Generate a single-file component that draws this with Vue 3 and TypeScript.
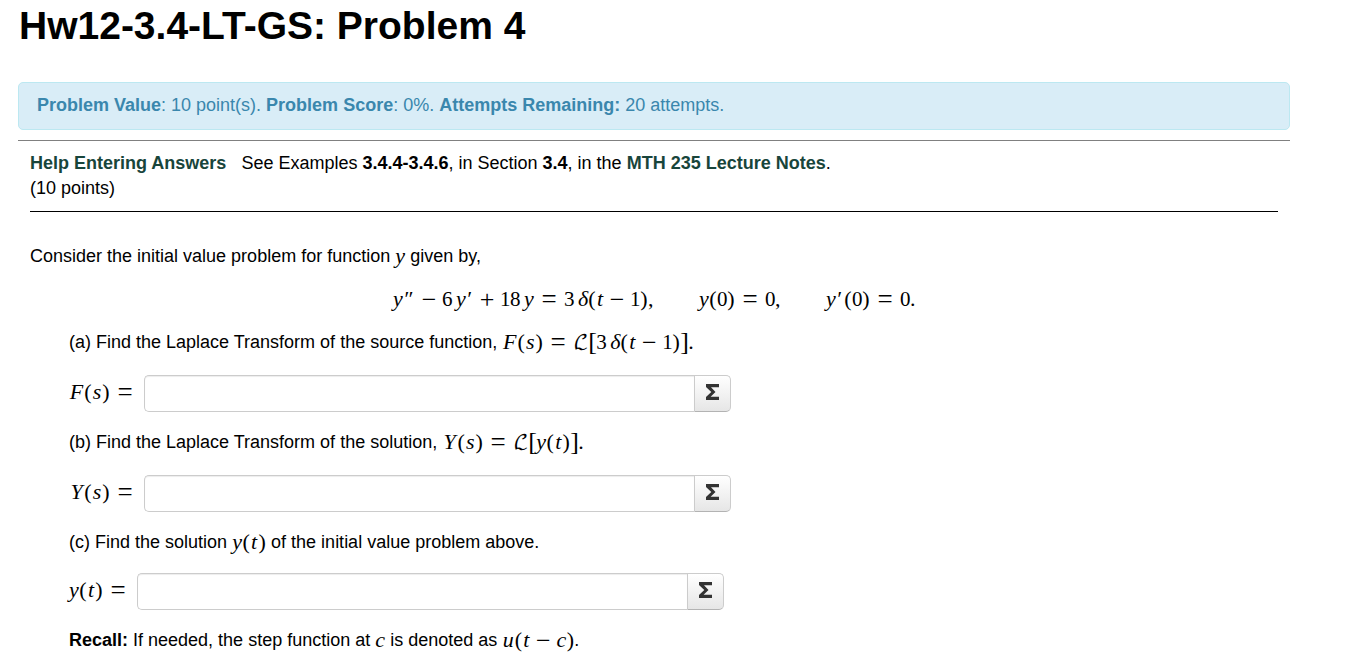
<script setup lang="ts">
import { h, ref, type FunctionalComponent } from 'vue'

const kinds: Record<string, string> = {
  y: 'var mid', s: 'var mid', c: 'var mid', 'δ': 'var mid', t: 'var narrow', u: 'var broad',
  F: 'var wide', Y: 'var wide', L: 'script', '(': 'paren', ')': 'paren', '[': 'bracket', ']': 'bracket',
  '=': 'rel', '−': 'op', '+': 'op', '′': 'prime', '″': 'prime double', ',': 'punct', '.': 'punct', '~': 'thin', '_': 'quad',
}
const glyphs: Record<string, string> = { L: 'ℒ', '~': ' ', _: ' ' }

const Formula: FunctionalComponent<{ tex: string }> = (props) =>
  h('span', { class: 'formula' },
    [...props.tex].map((ch) => h('span', { class: kinds[ch] ?? 'digit' }, glyphs[ch] ?? ch)))
Formula.props = ['tex']

const parts = [
  { id: 'a', before: '(a) Find the Laplace Transform of the source function, ', tex: 'F(s)=L[3~δ(t−1)].', after: '', label: 'F(s)=' },
  { id: 'b', before: '(b) Find the Laplace Transform of the solution, ', tex: 'Y(s)=L[y(t)].', after: '', label: 'Y(s)=' },
  { id: 'c', before: '(c) Find the solution ', tex: 'y(t)', after: ' of the initial value problem above.', label: 'y(t)=' },
]
const answers = ref<Record<string, string>>({ a: '', b: '', c: '' })
</script>

<template>
  <main class="page">
    <h1>Hw12-3.4-LT-GS: Problem 4</h1>
    <div class="alert">
      <b>Problem Value</b>: 10 point(s). <b>Problem Score</b>: 0%. <b>Attempts Remaining:</b> 20 attempts.
    </div>
    <section class="problem">
      <p><a class="help" href="#">Help Entering Answers</a>See Examples <b>3.4.4-3.4.6</b>, in Section <b>3.4</b>, in the <a href="#">MTH 235 Lecture Notes</a>.</p>
      <p>(10 points)</p>
      <hr>
      <p>Consider the initial value problem for function <Formula tex="y" /> given by,</p>
      <div class="display"><Formula tex="y″−6~y′+18~y=3~δ(t−1),_y(0)=0,_y′(0)=0." /></div>
      <div class="parts">
        <template v-for="part in parts" :key="part.id">
          <p :class="{ tall: part.tex.includes('[') }">{{ part.before }}<Formula :tex="part.tex" />{{ part.after }}</p>
          <div class="answer">
            <label :for="'answer-' + part.id"><Formula :tex="part.label" /></label>
            <div class="group">
              <input :id="'answer-' + part.id" v-model="answers[part.id]" type="text">
              <button type="button" aria-label="Equation editor">
                <svg width="13" height="16" viewBox="0 0 13 16" aria-hidden="true">
                  <path d="M0 0H13V3.200H5L9.500 8L4.600 12.800H13V16H0V13L5.300 8L0 3Z" fill="#333" />
                </svg>
              </button>
            </div>
          </div>
        </template>
        <p><b>Recall:</b> If needed, the step function at <Formula tex="c" /> is denoted as <Formula tex="u(t−c)" />.</p>
      </div>
    </section>
  </main>
</template>

<style>
body { background: #fff; }
</style>

<style scoped>
.page { padding: 0 65px 0 18px; font: 18px/25px "Liberation Sans", Arial, sans-serif; color: #000; }
h1 { margin: 0; padding: 2px 0 32px 1px; font-size: 39px; line-height: 48px; }
.alert { padding: 10px 18px 12px; color: #3a87ad; background: #d9edf7; border: 1px solid #bce8f1; border-radius: 5px; line-height: 24px; }
.problem { margin-top: 10px; padding: 10px 12px 0; border-top: 1px solid #808080; }
p { margin: 0; line-height: 25px; }
a { color: #18453b; font-weight: bold; text-decoration: none; }
.help { margin-right: 15px; }
hr { height: 1px; margin: 10px 0 32px; border: 0; background: #000; }
.display { margin-top: 18px; text-align: center; line-height: 25px; }
.parts { padding: 18px 0 0 39px; }
.tall { padding-bottom: 2px; }
.answer { display: flex; align-items: center; gap: 11px; margin: 18px 0; }
.answer label { line-height: 24px; padding-bottom: 3px; }
.group { display: flex; flex: 0 1 587px; height: 37px; }
input { flex: 1; min-width: 0; box-sizing: border-box; padding: 4px 8px; border: 1px solid #ccc; border-right: 0; border-radius: 5px 0 0 5px; background: #fff; box-shadow: inset 0 1px 1px #00000013; font: inherit; }
button { display: flex; align-items: center; justify-content: center; width: 37px; box-sizing: border-box; padding: 0 0 3px; border: 1px solid #ccc; border-bottom-color: #b3b3b3; border-radius: 0 5px 5px 0; background: linear-gradient(#fff, #e6e6e6); }
.formula { display: inline-block; vertical-align: -1px; white-space: nowrap; line-height: 0; font-family: "Liberation Serif", "Times New Roman", serif; font-size: 22px; }
.formula :deep(span) { display: inline-block; text-align: center; line-height: 0; }
.formula :deep(.var) { font-style: italic; }
.formula :deep(.narrow) { width: 8px; }
.formula :deep(.mid), .formula :deep(.digit) { width: 10px; }
.formula :deep(.digit) { font-size: 21px; }
.formula :deep(.broad) { width: 12px; }
.formula :deep(.wide) { width: 15px; }
.formula :deep(.script) { width: 15px; font-family: "DejaVu Math TeX Gyre", "DejaVu Serif", "DejaVu Sans", serif; font-size: 20px; }
.formula :deep(.paren) { width: 8px; }
.formula :deep(.bracket) { width: 8px; font-size: 26px; vertical-align: -1px; }
.formula :deep(.rel) { width: 16px; margin: 0 7px; font-size: 27px; vertical-align: -2px; }
.formula :deep(.rel:last-child) { margin-right: 0; }
.formula :deep(.op) { width: 16px; margin: 0 5px; font-size: 26px; vertical-align: -2px; }
.formula :deep(.prime) { width: 8px; text-align: left; font-style: italic; }
.formula :deep(.double) { width: 13px; }
.formula :deep(.punct) { width: 5px; }
.formula :deep(.thin) { width: 4px; }
.formula :deep(.quad) { width: 46px; }
</style>
